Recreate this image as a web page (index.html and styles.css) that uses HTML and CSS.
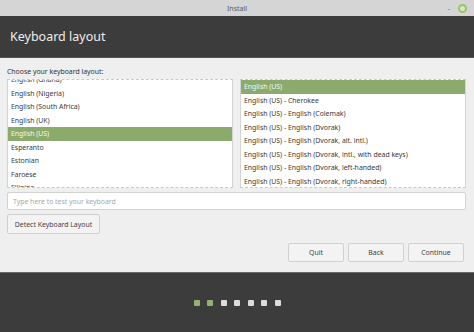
FILE: index.html
```html
<!DOCTYPE html>
<html lang="en">
<head>
    <meta charset="UTF-8">
    <meta name="viewport" content="width=device-width, initial-scale=1.0">
    <title>Install</title>
    <link rel="stylesheet" href="styles.css">
</head>
<body>
    <div class="window">
        <div class="titlebar">
            <span></span>
            <span class="title">Install</span>
            <div class="controls">
                <span class="minimize">-</span>
                <span class="close"></span>
            </div>
        </div>
        <div class="header">Keyboard layout</div>
        <div class="content">
            <div class="label">Choose your keyboard layout:</div>
            <div class="lists">
                <div class="list">
                    <ul class="rows scrolled">
                        <li>English (Ghana)</li>
                        <li>English (Nigeria)</li>
                        <li>English (South Africa)</li>
                        <li>English (UK)</li>
                        <li class="selected">English (US)</li>
                        <li>Esperanto</li>
                        <li>Estonian</li>
                        <li>Faroese</li>
                        <li>Filipino</li>
                    </ul>
                </div>
                <div class="list">
                    <ul class="rows">
                        <li class="selected">English (US)</li>
                        <li>English (US) - Cherokee</li>
                        <li>English (US) - English (Colemak)</li>
                        <li>English (US) - English (Dvorak)</li>
                        <li>English (US) - English (Dvorak, alt. intl.)</li>
                        <li>English (US) - English (Dvorak, intl., with dead keys)</li>
                        <li>English (US) - English (Dvorak, left-handed)</li>
                        <li>English (US) - English (Dvorak, right-handed)</li>
                    </ul>
                </div>
            </div>
            <input type="text" class="test-input" placeholder="Type here to test your keyboard">
            <button class="detect">Detect Keyboard Layout</button>
            <div class="actions">
                <button>Quit</button>
                <button>Back</button>
                <button>Continue</button>
            </div>
        </div>
        <div class="footer">
            <span class="dot done"></span>
            <span class="dot done"></span>
            <span class="dot"></span>
            <span class="dot"></span>
            <span class="dot"></span>
            <span class="dot"></span>
            <span class="dot"></span>
        </div>
    </div>
</body>
</html>
```

FILE: styles.css
```css
body {
    margin: 0;
    font-family: "Noto Sans", sans-serif;
    background-color: #efefef;
}
.window {
    width: 474px;
    height: 332px;
    display: flex;
    flex-direction: column;
    overflow: hidden;
}
.titlebar {
    height: 16px;
    background-color: #d5d5d5;
    display: grid;
    grid-template-columns: 1fr auto 1fr;
    align-items: center;
    font-size: 7px;
    color: #5a5a5a;
}
.controls {
    display: flex;
    justify-content: flex-end;
    align-items: center;
    gap: 8px;
    padding-right: 7px;
}
.minimize {
    font-size: 8px;
    color: #888;
}
.close {
    width: 5px;
    height: 5px;
    border-radius: 50%;
    border: 2px solid #9dc06f;
    background-color: #d8e8c4;
}
.header {
    height: 41px;
    background-color: #3c3c3c;
    color: #ececec;
    font-size: 12.5px;
    padding-left: 10px;
    display: flex;
    align-items: center;
    border-bottom: 1px solid #555;
}
.content {
    flex: 1;
    padding: 7px 8px 0 7px;
    display: flex;
    flex-direction: column;
}
.label {
    font-size: 6.9px;
    color: #333;
    height: 14px;
    line-height: 14px;
}
.lists {
    display: grid;
    grid-template-columns: 226px 226px;
    gap: 7px;
    height: 109px;
}
.list {
    background-color: #fff;
    border: 1px solid #d4d4d4;
    border-top: 1px dashed #c8c8c8;
    border-bottom: 1px dashed #c8c8c8;
    overflow: hidden;
}
.rows {
    list-style: none;
    margin: 0;
    padding: 0;
}
.rows.scrolled {
    margin-top: -7px;
}
.rows li {
    height: 13.5px;
    line-height: 13.5px;
    padding-left: 3px;
    font-size: 6.9px;
    color: #3a3a3a;
    white-space: nowrap;
}
.rows li.selected {
    background-color: #8bab6c;
    color: #f4f8ef;
}
.test-input {
    margin-top: 4px;
    height: 18px;
    box-sizing: border-box;
    border: 1px solid #d2d2d2;
    border-radius: 2px;
    padding: 0 5px;
    font-family: "Noto Sans", sans-serif;
    font-size: 6.9px;
    background-color: #fff;
}
.test-input::placeholder {
    color: #a8a8a8;
}
button {
    font-family: "Noto Sans", sans-serif;
    font-size: 6.9px;
    color: #444;
    background-color: #f3f3f3;
    border: 1px solid #d0d0d0;
    border-radius: 2px;
    padding: 0;
}
.detect {
    margin-top: 4px;
    width: 93px;
    height: 20px;
}
.actions {
    margin-top: 9px;
    display: flex;
    justify-content: flex-end;
    gap: 4px;
    padding-right: 2px;
}
.actions button {
    width: 56px;
    height: 19px;
}
.footer {
    height: 59px;
    background-color: #3c3c3c;
    border-top: 1px solid #6a6a6a;
    display: flex;
    justify-content: center;
    align-items: center;
    gap: 7.5px;
}
.dot {
    width: 6px;
    height: 6px;
    border-radius: 1px;
    background-color: #dcdcdc;
}
.dot.done {
    background-color: #93b36f;
}
```
